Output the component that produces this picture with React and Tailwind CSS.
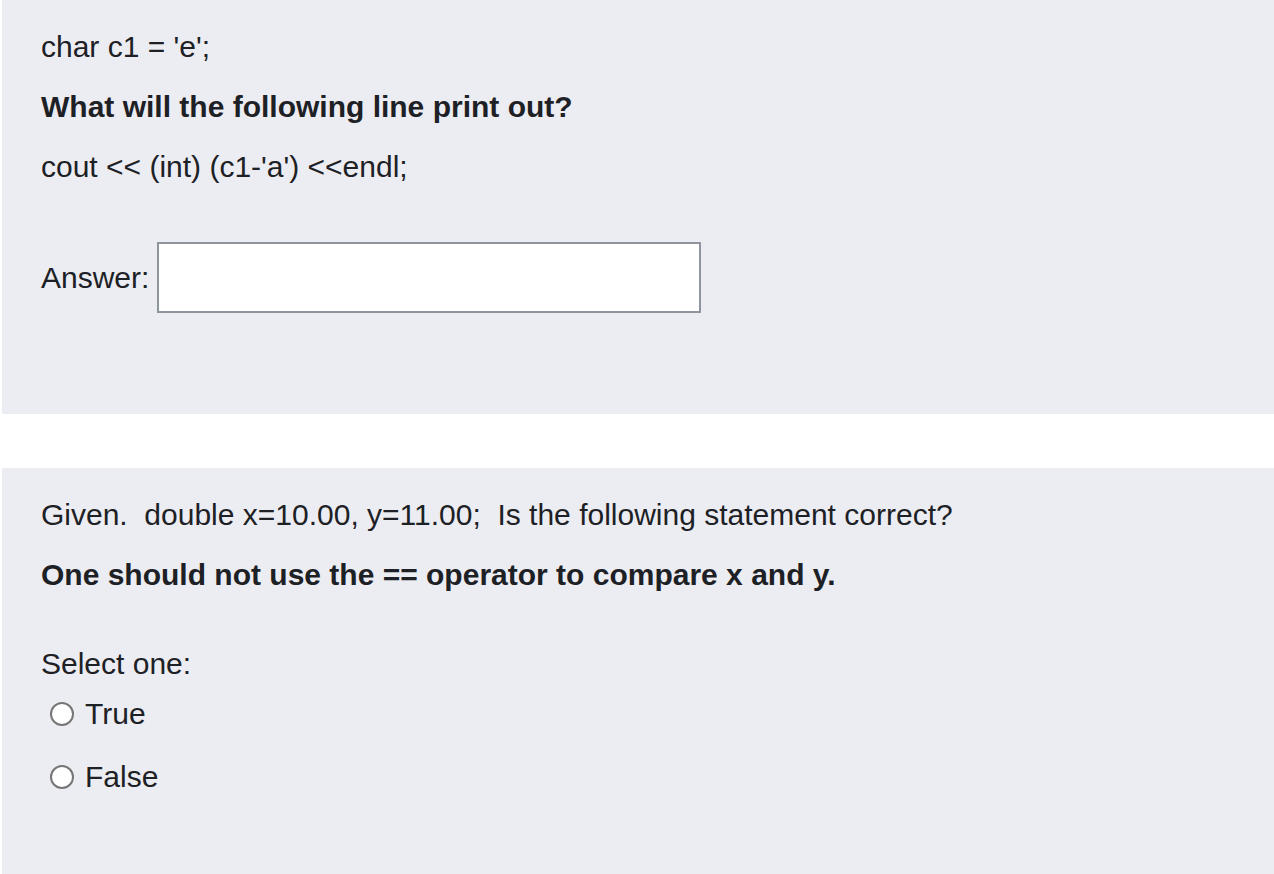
import React from 'react'

const FONT = { fontFamily: '"Liberation Sans", Arial, Helvetica, sans-serif' }

function Radio({ label }) {
  return (
    <label className="flex items-center h-[63px]">
      <span className="ml-[9px] w-[24px] h-[24px] rounded-full border-2 border-[#767676] bg-white" />
      <span className="ml-[11px]">{label}</span>
    </label>
  )
}

export default function App() {
  return (
    <div className="min-h-screen bg-white text-[#1d2125] text-[30px] leading-[45px]" style={FONT}>
      {/* Question 1 */}
      <div className="ml-[2px] bg-[#ecedf2] h-[414px] pt-[24px] pl-[39px]">
        <p>char c1 = 'e';</p>
        <p className="mt-[15px] font-bold">What will the following line print out?</p>
        <p className="mt-[15px]">cout &lt;&lt; (int) (c1-'a') &lt;&lt;endl;</p>
        <div className="mt-[53px] flex items-center">
          <span>Answer:</span>
          <div className="ml-[8px] w-[544px] h-[71px] bg-white border-2 border-[#8f959e]" />
        </div>
      </div>

      {/* Question 2 */}
      <div className="ml-[2px] mt-[54px] bg-[#ecedf2] h-[406px] pt-[24px] pl-[39px]">
        <p>Given.&nbsp; double x=10.00, y=11.00;&nbsp; Is the following statement correct?</p>
        <p className="mt-[15px] font-bold">One should not use the == operator to compare x and y.</p>
        <p className="mt-[44px]">Select one:</p>
        <div className="-mt-[4px]">
          <Radio label="True" />
          <Radio label="False" />
        </div>
      </div>
    </div>
  )
}
